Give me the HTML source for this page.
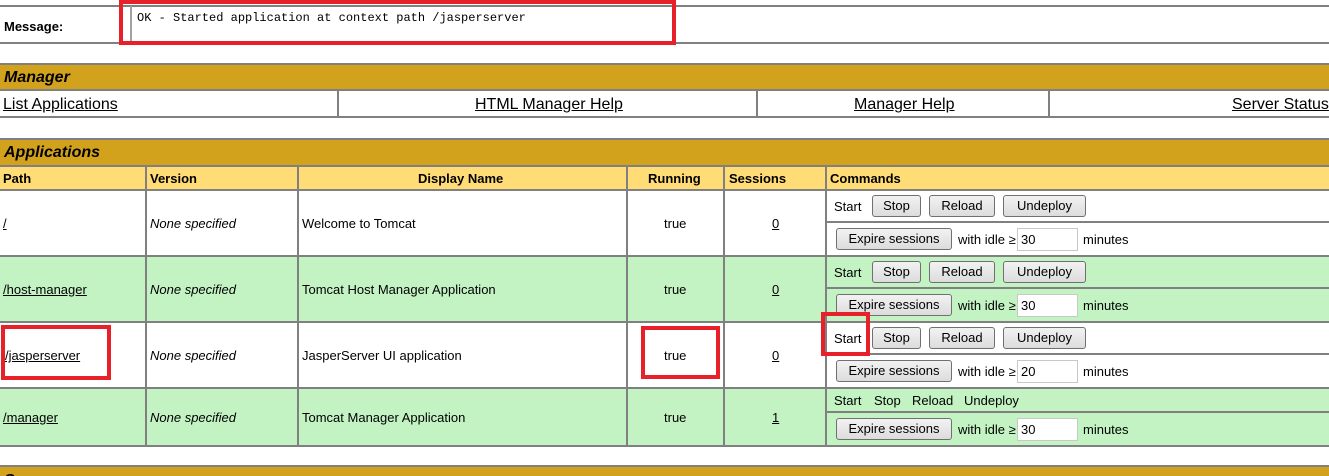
<!DOCTYPE html>
<html><head><style>
*{margin:0;padding:0;box-sizing:border-box}
html,body{width:1329px;height:476px;overflow:hidden}
body{background:#fff;position:relative;font-family:"Liberation Sans",Arial,sans-serif;color:#000}
.a{position:absolute}
.hl{position:absolute;left:0;width:1329px;height:2px;background:#808080}
.vl{position:absolute;width:2px;background:#808080}
.gold{position:absolute;left:0;width:1329px;background:#D2A21C}
.t{position:absolute;font-size:13px;white-space:nowrap}
.btn{position:absolute;height:22px;border:1px solid #707070;border-radius:3px;background:linear-gradient(#f2f2f2,#dcdcdc);font-size:13px;text-align:center;line-height:20px}
.inp{position:absolute;width:61px;height:23px;border:1px solid #c8c8c8;background:#fff;font-size:13px;line-height:21px;padding-left:3px}
.red{position:absolute;border:4px solid #E8202A}
u{text-decoration:underline}
</style></head><body>
<div class="hl" style="top:5px"></div>
<div class="hl" style="top:42px"></div>
<div class="t" style="left:4px;top:19px;font-weight:bold">Message:</div>
<div class="a" style="left:130px;top:6px;width:2px;height:37px;background:#a0a0a0"></div>
<div class="t" style="left:137px;top:11px;font-family:'Liberation Mono',monospace;font-size:12px">OK - Started application at context path /jasperserver</div>
<div class="red" style="left:119px;top:0;width:557px;height:45px"></div>

<div class="hl" style="top:63px"></div>
<div class="gold" style="top:65px;height:24px"></div>
<div class="t" style="left:4px;top:69px;font-size:16px;font-weight:bold;font-style:italic">Manager</div>
<div class="hl" style="top:89px"></div>
<div class="hl" style="top:116px"></div>
<div class="vl" style="left:337px;top:91px;height:25px"></div>
<div class="vl" style="left:756px;top:91px;height:25px"></div>
<div class="vl" style="left:1048px;top:91px;height:25px"></div>
<div class="t" style="left:3px;top:96px;font-size:16px"><u>List Applications</u></div>
<div class="t" style="left:475px;top:96px;font-size:16px"><u>HTML Manager Help</u></div>
<div class="t" style="left:854px;top:96px;font-size:16px"><u>Manager Help</u></div>
<div class="t" style="left:1232px;top:96px;font-size:16px"><u>Server Status</u></div>

<div class="hl" style="top:138px"></div>
<div class="gold" style="top:140px;height:25px"></div>
<div class="t" style="left:4px;top:144px;font-size:16px;font-weight:bold;font-style:italic">Applications</div>
<div class="a" style="left:0;top:165px;width:1329px;height:25px;background:#FFDC75"></div>
<div class="a" style="left:0;top:190px;width:1329px;height:66px;background:#fff"></div>
<div class="a" style="left:0;top:256px;width:1329px;height:66px;background:#C3F3C3"></div>
<div class="a" style="left:0;top:322px;width:1329px;height:66px;background:#fff"></div>
<div class="a" style="left:0;top:388px;width:1329px;height:58px;background:#C3F3C3"></div>
<div class="hl" style="top:165px"></div>
<div class="hl" style="top:189px"></div>
<div class="hl" style="top:255px"></div>
<div class="hl" style="top:321px"></div>
<div class="hl" style="top:387px"></div>
<div class="hl" style="top:445px"></div>
<div class="a" style="left:827px;top:221px;width:502px;height:2px;background:#808080"></div>
<div class="a" style="left:827px;top:287px;width:502px;height:2px;background:#808080"></div>
<div class="a" style="left:827px;top:353px;width:502px;height:2px;background:#808080"></div>
<div class="a" style="left:827px;top:411px;width:502px;height:2px;background:#808080"></div>
<div class="vl" style="left:145px;top:165px;height:281px"></div>
<div class="vl" style="left:297px;top:165px;height:281px"></div>
<div class="vl" style="left:626px;top:165px;height:281px"></div>
<div class="vl" style="left:723px;top:165px;height:281px"></div>
<div class="vl" style="left:825px;top:165px;height:281px"></div>

<div class="t" style="left:3px;top:171px;font-weight:bold">Path</div>
<div class="t" style="left:150px;top:171px;font-weight:bold">Version</div>
<div class="t" style="left:418px;top:171px;font-weight:bold">Display Name</div>
<div class="t" style="left:648px;top:171px;font-weight:bold">Running</div>
<div class="t" style="left:729px;top:171px;font-weight:bold">Sessions</div>
<div class="t" style="left:830px;top:171px;font-weight:bold">Commands</div>

<div class="t" style="left:3px;top:216px"><u>/</u></div>
<div class="t" style="left:150px;top:216px;font-style:italic">None specified</div>
<div class="t" style="left:302px;top:216px">Welcome to Tomcat</div>
<div class="t" style="left:664px;top:216px">true</div>
<div class="t" style="left:772px;top:216px"><u>0</u></div>

<div class="t" style="left:3px;top:282px"><u>/host-manager</u></div>
<div class="t" style="left:150px;top:282px;font-style:italic">None specified</div>
<div class="t" style="left:302px;top:282px">Tomcat Host Manager Application</div>
<div class="t" style="left:664px;top:282px">true</div>
<div class="t" style="left:772px;top:282px"><u>0</u></div>

<div class="t" style="left:5px;top:348px"><u>/jasperserver</u></div>
<div class="t" style="left:150px;top:348px;font-style:italic">None specified</div>
<div class="t" style="left:302px;top:348px">JasperServer UI application</div>
<div class="t" style="left:664px;top:348px">true</div>
<div class="t" style="left:772px;top:348px"><u>0</u></div>

<div class="t" style="left:3px;top:410px"><u>/manager</u></div>
<div class="t" style="left:150px;top:410px;font-style:italic">None specified</div>
<div class="t" style="left:302px;top:410px">Tomcat Manager Application</div>
<div class="t" style="left:664px;top:410px">true</div>
<div class="t" style="left:772px;top:410px"><u>1</u></div>

<div class="t" style="left:834px;top:199px">Start</div>
<div class="btn" style="left:872px;top:195px;width:49px">Stop</div>
<div class="btn" style="left:929px;top:195px;width:66px">Reload</div>
<div class="btn" style="left:1003px;top:195px;width:83px">Undeploy</div>
<div class="btn" style="left:836px;top:228px;width:116px">Expire sessions</div>
<div class="t" style="left:958px;top:232px">with idle ≥</div>
<div class="inp" style="left:1017px;top:228px">30</div>
<div class="t" style="left:1083px;top:232px">minutes</div>

<div class="t" style="left:834px;top:265px">Start</div>
<div class="btn" style="left:872px;top:261px;width:49px">Stop</div>
<div class="btn" style="left:929px;top:261px;width:66px">Reload</div>
<div class="btn" style="left:1003px;top:261px;width:83px">Undeploy</div>
<div class="btn" style="left:836px;top:294px;width:116px">Expire sessions</div>
<div class="t" style="left:958px;top:298px">with idle ≥</div>
<div class="inp" style="left:1017px;top:294px">30</div>
<div class="t" style="left:1083px;top:298px">minutes</div>

<div class="t" style="left:834px;top:331px">Start</div>
<div class="btn" style="left:872px;top:327px;width:49px">Stop</div>
<div class="btn" style="left:929px;top:327px;width:66px">Reload</div>
<div class="btn" style="left:1003px;top:327px;width:83px">Undeploy</div>
<div class="btn" style="left:836px;top:360px;width:116px">Expire sessions</div>
<div class="t" style="left:958px;top:364px">with idle ≥</div>
<div class="inp" style="left:1017px;top:360px">20</div>
<div class="t" style="left:1083px;top:364px">minutes</div>

<div class="t" style="left:834px;top:393px">Start</div>
<div class="t" style="left:874px;top:393px">Stop</div>
<div class="t" style="left:912px;top:393px">Reload</div>
<div class="t" style="left:964px;top:393px">Undeploy</div>
<div class="btn" style="left:836px;top:418px;width:116px">Expire sessions</div>
<div class="t" style="left:958px;top:422px">with idle ≥</div>
<div class="inp" style="left:1017px;top:418px">30</div>
<div class="t" style="left:1083px;top:422px">minutes</div>

<div class="hl" style="top:465px"></div>
<div class="gold" style="top:467px;height:9px"></div>
<div class="t" style="left:4px;top:472px;font-size:16px;font-weight:bold;font-style:italic">Server</div>

<div class="red" style="left:1px;top:325px;width:110px;height:55px"></div>
<div class="red" style="left:641px;top:326px;width:79px;height:53px"></div>
<div class="red" style="left:821px;top:312px;width:49px;height:44px"></div>
</body></html>
